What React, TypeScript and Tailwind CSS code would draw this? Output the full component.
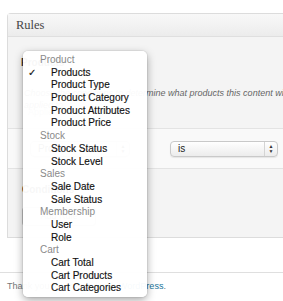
const groups: { label: string; items: string[] }[] = [
  { label: "Product", items: ["Products", "Product Type", "Product Category", "Product Attributes", "Product Price"] },
  { label: "Stock", items: ["Stock Status", "Stock Level"] },
  { label: "Sales", items: ["Sale Date", "Sale Status"] },
  { label: "Membership", items: ["User", "Role"] },
  { label: "Cart", items: ["Cart Total", "Cart Products", "Cart Categories"] },
];

const SelectBox: React.FC<{ value: string; className?: string }> = ({ value, className }) => (
  <div
    className={`flex h-[16px] items-center rounded-[4px] border border-[#c9c9c9] bg-gradient-to-b from-white to-[#ececec] shadow-[0_1px_1px_rgba(0,0,0,0.08)] ${className ?? ""}`}
  >
    <span className="flex-1 pl-[7px] text-[10px] leading-none text-[#222]">{value}</span>
    <span className="flex h-full w-[13px] flex-col items-center justify-center border-l border-[#d4d4d4] text-[5px] leading-[5px] text-[#333]">
      <span>▲</span>
      <span>▼</span>
    </span>
  </div>
);

const Menu: React.FC = () => (
  <div className="absolute left-[23px] top-[51px] w-[124px] rounded-[5px] bg-white/[0.96] pb-[2px] pt-[3px] shadow-[0_3px_9px_rgba(0,0,0,0.35),0_0_0_1px_rgba(0,0,0,0.05)]">
    {groups.map((g) => (
      <div key={g.label}>
        <div className="h-[12.7px] pl-[17px] text-[10px] leading-[12.7px] text-[#8a8a8a]">{g.label}</div>
        {g.items.map((item) => (
          <div
            key={item}
            className="relative h-[12.7px] pl-[28px] text-[10px] leading-[12.7px] text-[#111] [-webkit-text-stroke:0.15px_#111]"
          >
            {item === "Products" && <span className="absolute left-[5px] top-0">✓</span>}
            {item}
          </div>
        ))}
      </div>
    ))}
  </div>
);

export default function App() {
  return (
    <div className="relative h-[301px] w-[283px] overflow-hidden bg-white font-['Liberation_Sans',Arial,sans-serif]">
      <div className="ml-[7px] mt-[13px] w-[300px] rounded-tl-[4px] border border-r-0 border-[#dcdcdc] bg-[#f4f4f4]">
        <div className="flex h-[23px] items-center border-b border-[#dfdfdf] bg-gradient-to-b from-[#f8f8f8] to-[#ececec] pl-[8px] font-['Liberation_Serif',Georgia,serif] text-[12.5px] text-[#464646]">
          Rules
        </div>

        <div className="flex flex-col pb-[11px]">
          <div className="ml-[13px] mt-[20px] h-[12px] text-[10px] font-bold leading-[12px] text-[#333]">
            Products
          </div>
          <div className="ml-[16px] mt-[18px] h-[12px] text-[9px] italic leading-[12px] text-[#666]">
            Choose the conditions to determine what products this content will be applied to.
          </div>
          <div className="ml-[20px] mt-[7px] h-[12px] text-[9px] leading-[12px] text-[#aaa]">Applies to</div>

          <div className="mt-[10px] flex h-[41px] items-center border-y border-[#e3e3e3] bg-[#f9f9f9] pl-[22px]">
            <SelectBox value="Product" className="w-[100px]" />
            <SelectBox value="is" className="ml-[40px] w-[108px]" />
          </div>

          <div className="ml-[14px] mt-[15px] h-[12px] text-[10px] font-bold leading-[12px] text-[#333]">
            Conditions
          </div>
          <div className="ml-[14px] mt-[11px] flex h-[19px] w-[74px] items-center justify-center rounded-[3px] border border-[#c4c4c4] bg-gradient-to-b from-white to-[#eeeeee] text-[9px] text-[#888]">
            Add Rule
          </div>
        </div>
      </div>

      <div className="mt-[34px] border-t border-[#dfdfdf] pl-[7px] pt-[7px] text-[9.1px] leading-[12px] text-[#777]">
        Thank you for creating with <span className="text-[#21759b]">WordPress</span>.
      </div>

      <Menu />
    </div>
  );
}
